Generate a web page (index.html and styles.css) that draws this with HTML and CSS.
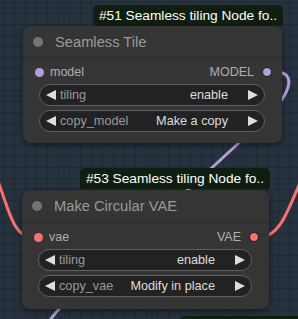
FILE: index.html
```html
<!DOCTYPE html>
<html>
<head>
<meta charset="utf-8">
<link rel="stylesheet" href="styles.css">
</head>
<body>
<div class="canvas">
  <svg class="links" width="298" height="319" viewBox="0 0 298 319">
    <path class="link model" d="M 276 72 C 296 72, 292 92, 268 116 L 62 306 Q 50 318, 44 330"/>
    <path class="link vae" d="M -4 176 C 8 205, 12 237, 32 237"/>
    <path class="link vae" d="M 260 237 C 280 237, 288 210, 302 178"/>
  </svg>

  <div class="node node-a">
    <div class="badge">#51 Seamless tiling Node fo..</div>
    <div class="title"><span class="title-dot"></span><span class="title-text">Seamless Tile</span></div>
    <div class="body">
      <div class="slots">
        <div class="slot in"><span class="dot model-c"></span><span>model</span></div>
        <div class="slot out"><span>MODEL</span><span class="dot ring model-c"></span></div>
      </div>
      <div class="widget"><span class="arrow left"></span><span class="w-label">tiling</span><span class="w-value">enable</span><span class="arrow right"></span></div>
      <div class="widget"><span class="arrow left"></span><span class="w-label">copy_model</span><span class="w-value">Make a copy</span><span class="arrow right"></span></div>
    </div>
  </div>

  <div class="node node-b">
    <div class="badge">#53 Seamless tiling Node fo..</div>
    <div class="title"><span class="title-dot"></span><span class="title-text">Make Circular VAE</span></div>
    <div class="body">
      <div class="slots">
        <div class="slot in"><span class="dot vae-c"></span><span>vae</span></div>
        <div class="slot out"><span>VAE</span><span class="dot ring vae-c"></span></div>
      </div>
      <div class="widget"><span class="arrow left"></span><span class="w-label">tiling</span><span class="w-value">enable</span><span class="arrow right"></span></div>
      <div class="widget"><span class="arrow left"></span><span class="w-label">copy_vae</span><span class="w-value">Modify in place</span><span class="arrow right"></span></div>
    </div>
  </div>

  <div class="badge-bottom"></div>
</div>
</body>
</html>
```

FILE: styles.css
```css
* { box-sizing: border-box; }
html, body {
  margin: 0;
  padding: 0;
  width: 298px;
  height: 319px;
  overflow: hidden;
  font-family: "Liberation Sans", Arial, sans-serif;
}
.canvas {
  position: relative;
  width: 298px;
  height: 319px;
  background-color: #26323e;
  background-image:
    linear-gradient(to right, #1f2a35 1px, transparent 1px),
    linear-gradient(to bottom, #1f2a35 1px, transparent 1px);
  background-size: 11px 11px;
  background-position: 3px 2px;
  overflow: hidden;
}
.links {
  position: absolute;
  left: 0;
  top: 0;
}
.link {
  fill: none;
  stroke-width: 3;
  stroke-linecap: round;
}
.link.model { stroke: #b39ddb; }
.link.vae { stroke: #ff6e6e; }

.node {
  position: absolute;
  background: #353535;
  border-radius: 8px;
  box-shadow: 0 2px 6px rgba(0, 0, 0, 0.45);
  display: flex;
  flex-direction: column;
}
.node-a { left: 23px; top: 26px; width: 259px; height: 117px; }
.node-b { left: 22px; top: 190px; width: 247px; height: 119px; }

.badge {
  position: absolute;
  right: -1px;
  bottom: 100%;
  height: 21px;
  padding: 0 6px;
  background: #0f1e0f;
  border-radius: 5px 5px 3px 3px;
  color: #ffffff;
  font-size: 13.7px;
  line-height: 21px;
  white-space: nowrap;
}
.node-b .badge { bottom: calc(100% + 1px); }

.title {
  height: 32px;
  display: flex;
  align-items: center;
  border-bottom: 1px solid #2c2c2c;
  padding-left: 10px;
}
.title-dot {
  width: 10px;
  height: 10px;
  border-radius: 50%;
  background: #747474;
  flex: none;
}
.title-text {
  margin-left: 12px;
  color: #9a9a9a;
  font-size: 14.7px;
}
.node-b .title { height: 33px; }

.body {
  padding: 4px 17px 11px 16px;
  display: flex;
  flex-direction: column;
  gap: 4px;
}
.slots {
  height: 20px;
  margin: 0 -7px 0 -10px;
  display: flex;
  justify-content: space-between;
  align-items: center;
  color: #aeaeae;
  font-size: 12.5px;
  margin-bottom: -2px;
}
.slot {
  display: flex;
  align-items: center;
}
.slot.in { padding-left: 6px; gap: 3px; }
.slot.in .dot { margin-right: 3px; }
.slot.out { padding-right: 0; gap: 8px; }
.dot {
  width: 9px;
  height: 9px;
  border-radius: 50%;
  flex: none;
}
.dot.ring { border: 1px solid #1a1a1a; width: 10px; height: 10px; }
.model-c { background: #b39ddb; }
.vae-c { background: #ff6e6e; }

.widget {
  height: 22px;
  border: 1px solid #5f5f5f;
  border-radius: 11px;
  background: #222222;
  display: flex;
  align-items: center;
  padding: 0 6px;
  font-size: 12.7px;
  white-space: nowrap;
}
.arrow {
  width: 0;
  height: 0;
  border-top: 5.5px solid transparent;
  border-bottom: 5.5px solid transparent;
  flex: none;
}
.arrow.left { border-right: 10px solid #dddddd; }
.arrow.right { border-left: 10px solid #dddddd; }
.w-label {
  margin-left: 4px;
  color: #999999;
  flex: 1;
}
.w-value {
  color: #dddddd;
  margin-right: 20px;
}

.badge-bottom {
  position: absolute;
  left: 180px;
  top: 316px;
  width: 130px;
  height: 20px;
  background: #0f1e0f;
  border-radius: 5px;
}
```
